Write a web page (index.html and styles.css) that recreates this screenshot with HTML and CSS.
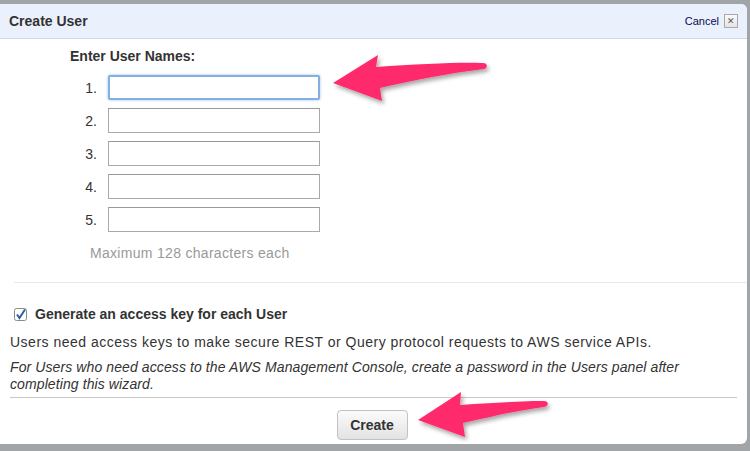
FILE: index.html
```
<!DOCTYPE html>
<html lang="en">
<head>
    <meta charset="UTF-8">
    <meta name="viewport" content="width=device-width, initial-scale=1.0">
    <title>Create User</title>
    <link rel="stylesheet" href="styles.css">
</head>
<body>
    <div class="dialog">
        <div class="dialog-header">
            <span class="dialog-title">Create User</span>
            <span class="dialog-close">
                <a class="cancel-link" href="#">Cancel</a>
                <span class="close-box">&#x2715;</span>
            </span>
        </div>

        <div class="dialog-body">
            <div class="names-heading">Enter User Names:</div>
            <div class="name-rows">
                <div class="name-row"><span class="row-num">1.</span><input class="name-input focused" type="text"></div>
                <div class="name-row"><span class="row-num">2.</span><input class="name-input" type="text"></div>
                <div class="name-row"><span class="row-num">3.</span><input class="name-input" type="text"></div>
                <div class="name-row"><span class="row-num">4.</span><input class="name-input" type="text"></div>
                <div class="name-row"><span class="row-num">5.</span><input class="name-input" type="text"></div>
            </div>
            <div class="hint">Maximum 128 characters each</div>

            <div class="divider light"></div>

            <label class="check-row">
                <span class="check-box">
                    <svg width="13" height="13" viewBox="0 0 13 13">
                        <rect x="0.5" y="0.5" width="12" height="12" rx="2" fill="#fff" stroke="#8a8a8a"/>
                        <path d="M3 6.5 L5.5 10 L11 1.5" fill="none" stroke="#2a5ea8" stroke-width="2"/>
                    </svg>
                </span>
                Generate an access key for each User
            </label>
            <p class="info">Users need access keys to make secure REST or Query protocol requests to AWS service APIs.</p>
            <p class="note">For Users who need access to the AWS Management Console, create a password in the Users panel after completing this wizard.</p>

            <div class="divider"></div>

            <div class="actions">
                <button class="create-btn">Create</button>
            </div>
        </div>
    </div>

    <!-- annotation arrows drawn over the screenshot -->
    <svg class="arrows" width="750" height="451" viewBox="0 0 750 451">
        <defs>
            <filter id="shadow" x="-20%" y="-40%" width="140%" height="180%">
                <feDropShadow dx="2" dy="3" stdDeviation="2" flood-color="#000" flood-opacity="0.35"/>
            </filter>
        </defs>
        <path filter="url(#shadow)" fill="#ff2c6c"
              d="M333,83 L378,55 L376,67 C420,64 460,62 483,63 C488,63 488,68 484,69 C450,73 415,80 380,88 L382,101 Z"/>
        <path filter="url(#shadow)" fill="#ff2c6c"
              d="M418,420 L461,392 L460,405 C490,403 520,401 544,401 C549,401 549,406 544,407 C515,411 490,417 463,423 L465,437 Z"/>
    </svg>
</body>
</html>
```

FILE: styles.css
```
body {
    margin: 0;
    width: 750px;
    height: 451px;
    overflow: hidden;
    background-color: #a2a5a8;
    font-family: "Liberation Sans", Arial, sans-serif;
    color: #333;
}

.dialog {
    width: 747px;
    height: 440px;
    margin-top: 4px;
    background-color: #fff;
    border-radius: 0 6px 6px 0;
    overflow: hidden;
}

.dialog-header {
    height: 34px;
    padding: 0 9px;
    display: flex;
    align-items: center;
    justify-content: space-between;
    background-color: #eaf1fc;
    border-bottom: 1px solid #c9dbf2;
}

.dialog-title {
    font-size: 14px;
    font-weight: bold;
    color: #333;
}

.dialog-close {
    display: flex;
    align-items: center;
    gap: 5px;
}

.cancel-link {
    font-size: 11px;
    color: #0a0a55;
    text-decoration: none;
}

.close-box {
    width: 12px;
    height: 12px;
    border: 1px solid #a8a8a8;
    background: linear-gradient(#fafafa, #e4e4e4);
    font-size: 9px;
    line-height: 12px;
    text-align: center;
    color: #555;
}

.dialog-body {
    padding-top: 9px;
}

.names-heading {
    padding-left: 70px;
    font-size: 14px;
    font-weight: bold;
    line-height: 17px;
}

.name-rows {
    display: flex;
    flex-direction: column;
    gap: 8px;
    margin-top: 10px;
    padding-left: 70px;
}

.name-row {
    display: flex;
    align-items: center;
    gap: 11px;
}

.row-num {
    width: 27px;
    text-align: right;
    font-size: 14px;
}

.name-input {
    box-sizing: border-box;
    width: 212px;
    height: 25px;
    margin: 0;
    border: 1px solid #aaa;
    border-top-color: #999;
    outline: none;
    font-size: 14px;
}

.name-input.focused {
    border: 2px solid #86afdd;
    border-radius: 2px;
    box-shadow: 0 0 3px #9dc0ea;
}

.hint {
    margin-top: 13px;
    padding-left: 90px;
    font-size: 14px;
    line-height: 17px;
    letter-spacing: 0.3px;
    color: #999;
}

.divider {
    margin: 0 10px;
    border-top: 1px solid #c8c8c8;
}

.divider.light {
    margin: 20px 0 0 14px;
    border-top-color: #e8e8e8;
}

.check-row {
    display: flex;
    align-items: center;
    gap: 8px;
    margin-top: 23px;
    padding-left: 14px;
    font-size: 14px;
    font-weight: bold;
    line-height: 17px;
}

.check-box {
    display: flex;
}

.info {
    margin: 11px 0 0 10px;
    font-size: 14px;
    line-height: 17px;
    letter-spacing: 0.5px;
}

.note {
    margin: 8px 0 4px 10px;
    font-size: 14px;
    font-style: italic;
    line-height: 17px;
    letter-spacing: 0.1px;
}

.actions {
    display: flex;
    justify-content: center;
    padding-top: 12px;
}

.create-btn {
    width: 71px;
    height: 30px;
    margin-left: -3px;
    border: 1px solid #c2c2c2;
    border-radius: 4px;
    background: linear-gradient(#fbfbfb, #e3e3e3);
    font-family: "Liberation Sans", Arial, sans-serif;
    font-size: 14px;
    font-weight: bold;
    color: #333;
}

.arrows {
    position: absolute;
    left: 0;
    top: 0;
    pointer-events: none;
}
```
